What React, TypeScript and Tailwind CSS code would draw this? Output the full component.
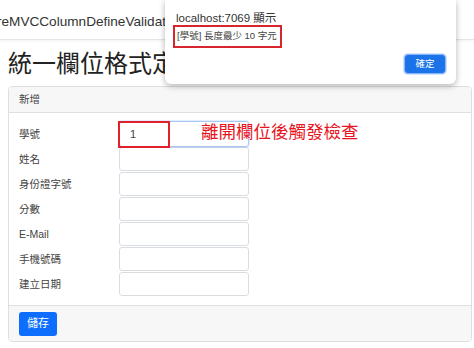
const fields = ["學號", "姓名", "身份證字號", "分數", "E-Mail", "手機號碼", "建立日期"];

export default function App() {
  return (
    <div
      className="relative w-[474px] h-[348px] overflow-hidden bg-white text-[#212529]"
      style={{ fontFamily: '"Liberation Sans", "Noto Sans CJK TC", sans-serif' }}
    >
      {/* Navbar */}
      <nav className="h-[40px] flex items-center pt-[5px] border-b border-[#e5e5e5] shadow-[0_1px_3px_rgba(0,0,0,0.06)] whitespace-nowrap">
        <span className="-ml-[3px] text-[13.6px] text-[#333]">reMVCColumnDefineValidation</span>
      </nav>

      <main className="px-[8px]">
        <h1 className="h-[46px] flex items-center pt-[2px] text-[24px] font-normal whitespace-nowrap text-[#222]">
          統一欄位格式定義驗證
        </h1>

        {/* Card */}
        <div className="w-[464px] border border-[#dfdfdf] rounded-[4px] overflow-hidden">
          <div className="h-[26px] flex items-center px-[10px] bg-[#f7f7f7] border-b border-[#dfdfdf] text-[10.5px] text-[#444]">
            新增
          </div>
          <div className="px-[10px] pt-[8px] pb-[9px]">
            {fields.map((f, i) => (
              <div key={f} className="grid grid-cols-[100px_130px] h-[25px] items-center">
                <label className="text-[10.5px] text-[#444] pt-[2px]">{f}</label>
                {i === 0 ? (
                  <div className="relative h-[26px]">
                    <div className="h-full flex items-center pl-[10px] border border-[#a9c8f5] rounded-[3px] shadow-[0_0_0_1px_rgba(13,110,253,0.12)] text-[11px] text-[#444]">
                      1
                    </div>
                    <div className="absolute left-[-1px] top-0 w-[52px] h-[27px] border-2 border-[#e0202a]" />
                    <span className="absolute left-[82px] top-0 whitespace-nowrap text-[17.5px] leading-[22px] text-[#e8141e]">
                      離開欄位後觸發檢查
                    </span>
                  </div>
                ) : (
                  <div className="h-[24px] border border-[#d9dde2] rounded-[3px]" />
                )}
              </div>
            ))}
          </div>
          <div className="h-[36px] flex items-center px-[10px] bg-[#f7f7f7] border-t border-[#dfdfdf]">
            <button className="w-[38px] h-[24px] rounded-[3px] bg-[#0d6efd] text-white text-[11px]">儲存</button>
          </div>
        </div>
      </main>

      {/* Alert dialog */}
      <div className="absolute left-[165px] top-0 w-[291px] h-[84px] bg-white rounded-b-[6px] shadow-[0_2px_6px_rgba(0,0,0,0.3)] flex flex-col pt-[11px] pl-[8px] pr-[10px]">
        <div className="pl-[3px] h-[14px] leading-[14px] text-[11.5px] text-[#333] whitespace-nowrap">localhost:7069 顯示</div>
        <div className="w-[109px] h-[23px] border-2 border-[#d8262e] flex items-center pl-[2px]">
          <span className="text-[9.5px] text-[#444] whitespace-nowrap">[學號] 長度最少 10 字元</span>
        </div>
        <div className="flex justify-end mt-[6px]">
          <button className="w-[42px] h-[20px] rounded-[4px] bg-[#1a73e8] border border-[#8ab4f8] ring-1 ring-[#d2e3fc] text-white text-[9.5px]">
            確定
          </button>
        </div>
      </div>
    </div>
  );
}
